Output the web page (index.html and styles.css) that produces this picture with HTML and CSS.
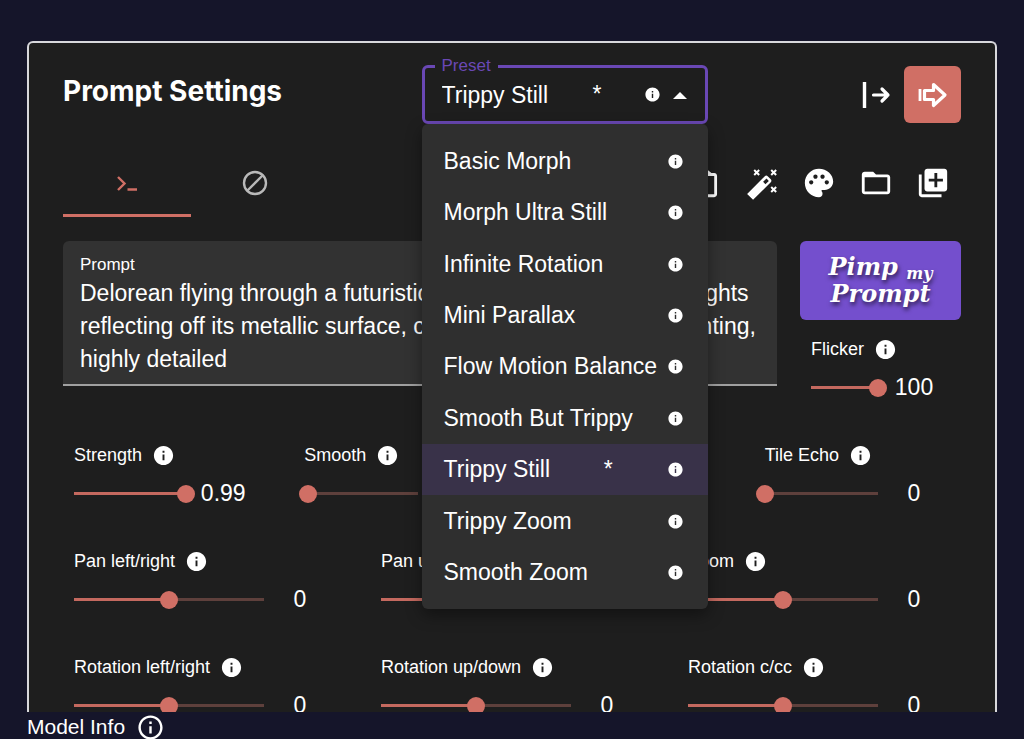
FILE: index.html
```html
<!DOCTYPE html>
<html lang="en">
<head>
    <meta charset="UTF-8">
    <meta name="viewport" content="width=device-width, initial-scale=1.0">
    <title>Prompt Settings</title>
    <link rel="stylesheet" href="styles.css">
</head>
<body>
    <svg class="sprite" aria-hidden="true">
        <symbol id="info" viewBox="0 0 24 24">
            <path d="M12 2C6.48 2 2 6.48 2 12s4.48 10 10 10 10-4.48 10-10S17.52 2 12 2zm1 15h-2v-6h2v6zm0-8h-2V7h2v2z"/>
        </symbol>
    </svg>

    <main class="panel">
        <header class="panel-header">
            <h1>Prompt Settings</h1>
            <div class="preset">
                <label class="preset-label" for="preset">Preset</label>
                <select id="preset" class="preset-select">
                    <option>Basic Morph</option>
                    <option>Morph Ultra Still</option>
                    <option>Infinite Rotation</option>
                    <option>Mini Parallax</option>
                    <option>Flow Motion Balance</option>
                    <option>Smooth But Trippy</option>
                    <option selected>Trippy Still</option>
                    <option>Trippy Zoom</option>
                    <option>Smooth Zoom</option>
                </select>
                <div class="preset-marks">
                    <span>*</span>
                    <svg class="icon-small"><use href="#info"/></svg>
                    <svg class="icon-caret" viewBox="0 0 14 8"><path d="M0 8l7-7 7 7z"/></svg>
                </div>
                <ul class="menu" role="listbox" aria-label="Preset">
                    <li class="menu-item" role="option">Basic Morph <svg class="icon-small"><use href="#info"/></svg></li>
                    <li class="menu-item" role="option">Morph Ultra Still <svg class="icon-small"><use href="#info"/></svg></li>
                    <li class="menu-item" role="option">Infinite Rotation <svg class="icon-small"><use href="#info"/></svg></li>
                    <li class="menu-item" role="option">Mini Parallax <svg class="icon-small"><use href="#info"/></svg></li>
                    <li class="menu-item" role="option">Flow Motion Balance <svg class="icon-small"><use href="#info"/></svg></li>
                    <li class="menu-item" role="option">Smooth But Trippy <svg class="icon-small"><use href="#info"/></svg></li>
                    <li class="menu-item selected" role="option" aria-selected="true">Trippy Still <span>*</span> <svg class="icon-small"><use href="#info"/></svg></li>
                    <li class="menu-item" role="option">Trippy Zoom <svg class="icon-small"><use href="#info"/></svg></li>
                    <li class="menu-item" role="option">Smooth Zoom <svg class="icon-small"><use href="#info"/></svg></li>
                </ul>
            </div>
            <div class="actions">
                <button class="icon-button" aria-label="Jump to start">
                    <svg class="icon stroked" viewBox="0 0 34 34"><path stroke-width="3.4" d="M5.500 4v26"/><path stroke-width="3.2" stroke-linecap="round" stroke-linejoin="round" d="M14.500 17H29M23 11l6 6-6 6"/></svg>
                </button>
                <button class="icon-button go" aria-label="Generate">
                    <svg class="icon stroked" viewBox="0 0 34 34"><path stroke-width="2.8" d="M4 11v12"/><path stroke-width="3.2" stroke-linejoin="round" d="M8.500 12.500h9V6.500L29 17 17.500 27.500v-6h-9z"/></svg>
                </button>
            </div>
        </header>

        <nav class="toolbar">
            <div class="tabs" role="tablist">
                <button class="tab active" role="tab" aria-selected="true" aria-label="Prompt">
                    <svg class="icon stroked" viewBox="0 0 34 34"><path stroke-width="2.4" d="M8 11l6.500 6.500L8 24M17.500 23.500H27"/></svg>
                </button>
                <button class="tab" role="tab" aria-selected="false" aria-label="Negative prompt">
                    <svg class="icon stroked" viewBox="0 0 34 34"><circle cx="17" cy="17" r="11" stroke-width="2.4"/><path stroke-width="2.4" d="M9.500 24.500l15-15"/></svg>
                </button>
            </div>
            <div class="tools">
                <button class="icon-button" aria-label="Clipboard">
                    <svg class="icon" viewBox="0 0 24 24"><path d="M13.500 2.500l3 2.500h2c1.100 0 2 .9 2 2v13c0 1.100-.9 2-2 2h-13c-1.100 0-2-.9-2-2V7c0-1.100.9-2 2-2h8zM18.500 7h-13v13h13z"/></svg>
                </button>
                <button class="icon-button" aria-label="Magic wand">
                    <svg class="icon" viewBox="0 0 24 24"><path fill-rule="evenodd" d="M1.500 19.800L14 7.200c.6-.6 1.400-.6 2 0l2.200 2.200c.6.6.6 1.400 0 2L5.700 23.900zM15.200 8.900l-2.400 2.300 1.600 1.600 2.400-2.300z"/><path class="sparks" d="M6.500 2.800l3.500 3.500m0-3.500l-3.500 3.500M18.500 2.800l3.500 3.500m0-3.500l-3.500 3.500M18.500 14.800l3.500 3.500m0-3.500l-3.500 3.500"/></svg>
                </button>
                <button class="icon-button" aria-label="Style">
                    <svg class="icon" viewBox="0 0 24 24"><path d="M12 2C6.49 2 2 6.49 2 12s4.49 10 10 10c1.38 0 2.500-1.120 2.500-2.500 0-.61-.23-1.200-.64-1.670-.08-.1-.13-.21-.13-.33 0-.28.22-.5.5-.5H16c3.310 0 6-2.690 6-6 0-4.960-4.490-9-10-9zm5.500 11c-.83 0-1.500-.67-1.500-1.500s.67-1.500 1.500-1.500 1.500.67 1.500 1.500-.67 1.500-1.500 1.500zm-3-4c-.83 0-1.500-.67-1.500-1.500S13.670 6 14.500 6s1.500.67 1.500 1.500S15.330 9 14.500 9zM5 11.500c0-.83.67-1.500 1.500-1.500s1.500.67 1.500 1.500S7.330 13 6.500 13 5 12.330 5 11.500zm6-4c0 .83-.67 1.500-1.500 1.500S8 8.330 8 7.500 8.670 6 9.500 6s1.500.67 1.500 1.500z"/></svg>
                </button>
                <button class="icon-button" aria-label="Open">
                    <svg class="icon" viewBox="0 0 24 24"><path d="M20 6h-8l-2-2H4c-1.100 0-2 .9-2 2v12c0 1.100.9 2 2 2h16c1.100 0 2-.9 2-2V8c0-1.100-.9-2-2-2zm0 12H4V8h16v10z"/></svg>
                </button>
                <button class="icon-button" aria-label="Add to library">
                    <svg class="icon" viewBox="0 0 24 24"><path d="M4 6H2v14c0 1.100.9 2 2 2h14v-2H4V6zm16-4H8c-1.100 0-2 .9-2 2v12c0 1.100.9 2 2 2h12c1.100 0 2-.9 2-2V4c0-1.100-.9-2-2-2zm-1 9h-4v4h-2v-4H9V9h4V5h2v4h4v2z"/></svg>
                </button>
            </div>
        </nav>

        <section class="prompt-row">
            <div class="prompt-box">
                <label for="prompt">Prompt</label>
                <textarea id="prompt" rows="3" spellcheck="false">Delorean flying through a futuristic cityscape with vivid neon lights reflecting off its metallic surface, cinematic lighting, digital painting, highly detailed</textarea>
            </div>
            <div class="prompt-side">
                <button class="pimp-button"><span>Pimp <small>my</small></span><span>Prompt</span></button>
                <div class="control">
                    <div class="control-label"><label for="flicker">Flicker</label><svg class="icon-info"><use href="#info"/></svg></div>
                    <div class="control-row">
                        <div class="rail"><input type="range" id="flicker" min="0" max="100" value="100" style="--fill: 100%"></div>
                        <output for="flicker">100</output>
                    </div>
                </div>
            </div>
        </section>

        <section class="controls four">
            <div class="control">
                <div class="control-label"><label for="strength">Strength</label><svg class="icon-info"><use href="#info"/></svg></div>
                <div class="control-row">
                    <div class="rail"><input type="range" id="strength" min="0" max="1" step="0.01" value="0.99" style="--fill: 99%"></div>
                    <output for="strength">0.99</output>
                </div>
            </div>
            <div class="control">
                <div class="control-label"><label for="smooth">Smooth</label><svg class="icon-info"><use href="#info"/></svg></div>
                <div class="control-row">
                    <div class="rail"><input type="range" id="smooth" min="0" max="100" value="3" style="--fill: 3%"></div>
                    <output for="smooth">3</output>
                </div>
            </div>
            <div class="control">
                <div class="control-label"><label for="echo">Echo</label><svg class="icon-info"><use href="#info"/></svg></div>
                <div class="control-row">
                    <div class="rail"><input type="range" id="echo" min="0" max="100" value="0" style="--fill: 0%"></div>
                    <output for="echo">0</output>
                </div>
            </div>
            <div class="control">
                <div class="control-label"><label for="tile-echo">Tile Echo</label><svg class="icon-info"><use href="#info"/></svg></div>
                <div class="control-row">
                    <div class="rail"><input type="range" id="tile-echo" min="0" max="100" value="0" style="--fill: 0%"></div>
                    <output for="tile-echo">0</output>
                </div>
            </div>
        </section>

        <section class="controls three">
            <div class="control">
                <div class="control-label"><label for="pan-x">Pan left/right</label><svg class="icon-info"><use href="#info"/></svg></div>
                <div class="control-row">
                    <div class="rail"><input type="range" id="pan-x" min="-10" max="10" value="0" style="--fill: 50%"></div>
                    <output for="pan-x">0</output>
                </div>
            </div>
            <div class="control">
                <div class="control-label"><label for="pan-y">Pan up/down</label><svg class="icon-info"><use href="#info"/></svg></div>
                <div class="control-row">
                    <div class="rail"><input type="range" id="pan-y" min="-10" max="10" value="0" style="--fill: 50%"></div>
                    <output for="pan-y">0</output>
                </div>
            </div>
            <div class="control">
                <div class="control-label"><label for="zoom">Zoom</label><svg class="icon-info"><use href="#info"/></svg></div>
                <div class="control-row">
                    <div class="rail"><input type="range" id="zoom" min="-10" max="10" value="0" style="--fill: 50%"></div>
                    <output for="zoom">0</output>
                </div>
            </div>
            <div class="control">
                <div class="control-label"><label for="rot-x">Rotation left/right</label><svg class="icon-info"><use href="#info"/></svg></div>
                <div class="control-row">
                    <div class="rail"><input type="range" id="rot-x" min="-10" max="10" value="0" style="--fill: 50%"></div>
                    <output for="rot-x">0</output>
                </div>
            </div>
            <div class="control">
                <div class="control-label"><label for="rot-y">Rotation up/down</label><svg class="icon-info"><use href="#info"/></svg></div>
                <div class="control-row">
                    <div class="rail"><input type="range" id="rot-y" min="-10" max="10" value="0" style="--fill: 50%"></div>
                    <output for="rot-y">0</output>
                </div>
            </div>
            <div class="control">
                <div class="control-label"><label for="rot-z">Rotation c/cc</label><svg class="icon-info"><use href="#info"/></svg></div>
                <div class="control-row">
                    <div class="rail"><input type="range" id="rot-z" min="-10" max="10" value="0" style="--fill: 50%"></div>
                    <output for="rot-z">0</output>
                </div>
            </div>
        </section>
    </main>

    <footer class="model-info">
        <span>Model Info</span>
        <svg class="icon-outline" viewBox="0 0 24 24"><path d="M11 7h2v2h-2zm0 4h2v6h-2zm1-9C6.480 2 2 6.480 2 12s4.480 10 10 10 10-4.480 10-10S17.520 2 12 2zm0 18c-4.410 0-8-3.590-8-8s3.590-8 8-8 8 3.590 8 8-3.590 8-8 8z"/></svg>
    </footer>
</body>
</html>
```

FILE: styles.css
```css
* {
    box-sizing: border-box;
}
body {
    display: flex;
    flex-direction: column;
    height: 100vh;
    margin: 0;
    padding: 41px 27px 0;
    overflow: hidden;
    background-color: #15152a;
    color: white;
    font-family: "Liberation Sans", Arial, sans-serif;
    font-size: 23px;
}
button, select, textarea {
    font-family: inherit;
    font-size: inherit;
    color: inherit;
}
button {
    padding: 0;
    border: none;
    background: none;
    cursor: pointer;
}
svg {
    flex: none;
    fill: currentColor;
}
.sprite {
    position: absolute;
    width: 0;
    height: 0;
}
.icon {
    width: 34px;
    height: 34px;
}
.icon-small {
    width: 17px;
    height: 17px;
}
.icon-info {
    width: 23px;
    height: 23px;
}
.icon-outline {
    width: 29px;
    height: 29px;
}
.icon-caret {
    width: 14px;
    height: 8px;
}
.stroked {
    fill: none;
    stroke: currentColor;
}
.sparks {
    stroke: currentColor;
    stroke-width: 1.4;
}
.panel {
    flex: 1;
    min-height: 0;
    overflow: hidden;
    padding: 22px 34px 0;
    border: 2px solid #d8d8dc;
    border-bottom: none;
    border-radius: 6px 6px 0 0;
    background-color: #1e1e1e;
}

/* header */
.panel-header {
    display: flex;
    align-items: center;
    justify-content: space-between;
    height: 59px;
}
h1 {
    margin: 0;
    padding-bottom: 8px;
    font-family: Inter, sans-serif;
    font-size: 28px;
    font-weight: 700;
    line-height: 34px;
}
.preset {
    position: relative;
    width: 286px;
    height: 59px;
    border: 3px solid #6a48b5;
    border-radius: 6px;
}
.preset-label {
    position: absolute;
    top: -12px;
    left: 10px;
    padding: 0 7px;
    background-color: #1e1e1e;
    color: #6a48b5;
    font-size: 17px;
    line-height: 20px;
}
.preset-select {
    appearance: none;
    width: 100%;
    height: 100%;
    padding: 0 0 0 17px;
    border: none;
    outline: none;
    background: none;
}
.preset-marks {
    position: absolute;
    top: 0;
    right: 18px;
    display: flex;
    align-items: center;
    height: 53px;
    pointer-events: none;
}
.preset-marks span {
    margin-right: 42px;
}
.preset-marks .icon-caret {
    margin-left: 12px;
}
.menu {
    position: absolute;
    top: 56px;
    left: -3px;
    z-index: 1;
    display: grid;
    grid-template-rows: repeat(9, 1fr);
    width: 286px;
    height: 485px;
    margin: 0;
    padding: 11px 0;
    border-radius: 6px;
    background-color: #2f2f2f;
    box-shadow: 0 6px 16px rgba(0, 0, 0, 0.4);
    list-style: none;
}
.menu-item {
    display: flex;
    align-items: center;
    justify-content: space-between;
    padding: 1px 24px 0 22px;
    white-space: nowrap;
    cursor: pointer;
}
.menu-item.selected {
    background-color: #393249;
}
.actions, .tools, .tabs {
    display: flex;
}
.icon-button {
    display: flex;
    align-items: center;
    justify-content: center;
    width: 57px;
    height: 57px;
    border-radius: 6px;
}
.icon-button.go {
    background-color: #d06f65;
}

/* tabs and tools */
.toolbar {
    display: flex;
    align-items: center;
    justify-content: space-between;
    margin: 24px 0;
}
.tab {
    display: flex;
    align-items: center;
    justify-content: center;
    width: 128px;
    height: 69px;
    padding-top: 3px;
    border-bottom: 3px solid transparent;
    color: #b9b9b9;
}
.tab.active {
    border-color: #d06f65;
    color: #d06f65;
}

/* prompt */
.prompt-row {
    display: flex;
    align-items: flex-start;
    gap: 23px;
}
.prompt-box {
    flex: 1;
    padding: 11px 17px 8px;
    border-bottom: 2px solid #a0a0a0;
    border-radius: 6px 6px 0 0;
    background-color: #323232;
}
.prompt-box label {
    display: block;
    font-size: 17px;
    line-height: 25px;
}
.prompt-box textarea {
    display: block;
    width: 100%;
    padding: 0;
    border: none;
    outline: none;
    resize: none;
    overflow: hidden;
    background: none;
    line-height: 33px;
}
.prompt-side {
    width: 161px;
}
.prompt-side .control {
    padding: 17px 23px 0 11px;
}
.pimp-button {
    display: flex;
    flex-direction: column;
    align-items: center;
    justify-content: center;
    width: 100%;
    height: 79px;
    border-radius: 6px;
    background-color: #744fcd;
    font-family: "DejaVu Serif", serif;
    font-size: 24px;
    font-style: italic;
    font-weight: 700;
    line-height: 24px;
    text-shadow: 1px 3px 4px rgba(0, 0, 0, 0.6);
}
.pimp-button small {
    font-size: 16px;
    line-height: 16px;
    vertical-align: -4px;
}

/* sliders */
.controls {
    display: grid;
    gap: 39px 57px;
    padding: 39px 23px 0 11px;
}
.controls.four {
    grid-template-columns: repeat(4, 1fr);
}
.controls.three {
    grid-template-columns: repeat(3, 1fr);
}
.control-label {
    display: flex;
    align-items: center;
    gap: 10px;
    height: 24px;
    font-size: 18px;
    white-space: nowrap;
}
.control-row {
    display: flex;
    align-items: center;
    gap: 12px;
    height: 43px;
    padding-top: 10px;
}
.control-row output {
    width: 48px;
    text-align: center;
}
.rail {
    display: flex;
    flex: 1;
    min-width: 0;
}
/* the thumb hangs over both ends of the rail */
input[type="range"] {
    appearance: none;
    flex: 1;
    min-width: 0;
    height: 18px;
    margin: 0 -9px;
    background: linear-gradient(to right, #c4695f var(--fill), #5e403c var(--fill)) no-repeat center / calc(100% - 18px) 3px;
    cursor: pointer;
}
input[type="range"]::-webkit-slider-thumb {
    appearance: none;
    width: 18px;
    height: 18px;
    border: none;
    border-radius: 50%;
    background-color: #d06f65;
}

/* footer */
.model-info {
    display: flex;
    flex: none;
    align-items: center;
    gap: 11px;
    height: 27px;
    padding-top: 3px;
    font-size: 21px;
}
```
